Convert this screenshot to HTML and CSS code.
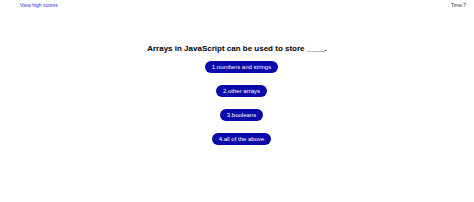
FILE: index.html
```html
<!DOCTYPE html>
<html>
<head>
<meta charset="utf-8">
<link rel="stylesheet" href="styles.css">
</head>
<body>
<header class="top">
  <a class="scores" href="#">View high scores</a>
  <span class="timer">Time:7</span>
</header>
<main class="quiz">
  <h1 class="question">Arrays in JavaScript can be used to store ____.</h1>
  <div class="choices">
    <button class="choice">1.numbers and strings</button>
    <button class="choice">2.other arrays</button>
    <button class="choice">3.booleans</button>
    <button class="choice">4.all of the above</button>
  </div>
</main>
</body>
</html>
```
FILE: styles.css
```css
html, body {
  margin: 0;
  padding: 0;
  background: #ffffff;
  font-family: "Liberation Sans", Arial, sans-serif;
}
.top {
  display: flex;
  justify-content: space-between;
  align-items: flex-start;
  padding: 2px 8px 0 20px;
  height: 10px;
  font-size: 5px;
}
.scores {
  color: #3030e0;
  text-decoration: none;
}
.timer {
  color: #333;
}
.quiz {
  display: flex;
  flex-direction: column;
  align-items: center;
  padding-top: 31px;
}
.question {
  margin: 0;
  font-size: 8px;
  font-weight: bold;
  color: #000;
  line-height: 12px;
}
.choices {
  display: flex;
  flex-direction: column;
  align-items: center;
  gap: 12px;
  margin-top: 6px;
  padding-left: 9px;
}
.choice {
  background: #0a0aaa;
  color: #fff;
  border: none;
  border-radius: 6px;
  font-family: "Liberation Sans", Arial, sans-serif;
  font-size: 6px;
  height: 12px;
  padding: 0 6.5px;
  line-height: 12px;
}
```
